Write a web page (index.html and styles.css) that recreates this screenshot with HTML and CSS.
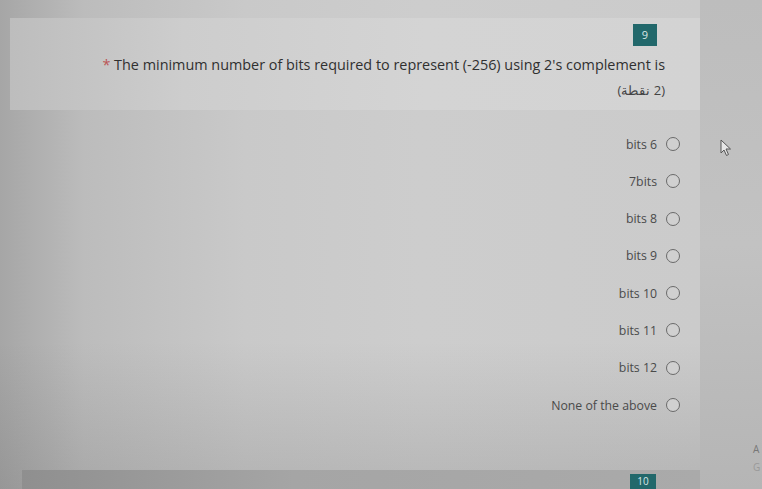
FILE: index.html
```html
<!DOCTYPE html>
<html>
<head>
<meta charset="utf-8">
<link rel="stylesheet" href="styles.css">
</head>
<body>
<div class="screen">
  <div class="main">
    <section class="question">
      <div class="qhead">
        <div class="badge">9</div>
        <p class="qtext"><span class="star">*</span> The minimum number of bits required to represent (-256) using 2's complement is</p>
        <p class="points">(<bdi lang="ar">نقطة</bdi> 2)</p>
      </div>
      <ul class="options">
        <li class="opt"><span class="label">bits 6</span><span class="radio"></span></li>
        <li class="opt"><span class="label">7bits</span><span class="radio"></span></li>
        <li class="opt"><span class="label">bits 8</span><span class="radio"></span></li>
        <li class="opt"><span class="label">bits 9</span><span class="radio"></span></li>
        <li class="opt"><span class="label">bits 10</span><span class="radio"></span></li>
        <li class="opt"><span class="label">bits 11</span><span class="radio"></span></li>
        <li class="opt"><span class="label">bits 12</span><span class="radio"></span></li>
        <li class="opt"><span class="label">None of the above</span><span class="radio"></span></li>
      </ul>
    </section>
    <section class="next">
      <div class="badge next-badge">10</div>
    </section>
  </div>
  <div class="side">
    <span class="edge e1">A</span>
    <span class="edge e2">G</span>
  </div>
  <svg class="cursor" width="12" height="18" viewBox="0 0 12 18"><path d="M1 1 L1 14 L4 11 L6.5 16.5 L8.5 15.5 L6 10 L10.5 10 Z" fill="#e6e6e6" stroke="#555" stroke-width="1"/></svg>
</div>
</body>
</html>
```
FILE: styles.css
```css
html, body {
  margin: 0;
  padding: 0;
}
body {
  width: 762px;
  height: 489px;
  overflow: hidden;
  font-family: "Open Sans", "Noto Sans", sans-serif;
  color: #3a3a3a;
}
.screen {
  position: relative;
  width: 762px;
  height: 489px;
  display: flex;
  background: linear-gradient(90deg, #a9a9a9 0%, #bdbdbd 15%, #c8c8c8 40%, #cbcbcb 70%, #c3c3c3 100%);
}
.main {
  width: 700px;
  display: flex;
  flex-direction: column;
  background:
    linear-gradient(180deg, rgba(255,255,255,0) 0%, rgba(255,255,255,0) 70%, rgba(80,80,80,0.18) 100%),
    linear-gradient(90deg, #a6a6a6 0%, #bcbcbc 12%, #c9c9c9 35%, #cdcdcd 60%, #cbcbcb 100%);
}
.question {
  flex: 1;
  display: flex;
  flex-direction: column;
}
.qhead {
  margin: 18px 0 0 10px;
  height: 92px;
  box-sizing: border-box;
  padding: 6px 35px 0 0;
  display: flex;
  flex-direction: column;
  align-items: flex-end;
  background: linear-gradient(90deg, #bdbdbd 0%, #cdcdcd 25%, #d4d4d4 60%, #d3d3d3 100%);
}
.badge {
  width: 24px;
  height: 22px;
  background: #22686b;
  color: #d8e6e6;
  font-size: 11px;
  line-height: 22px;
  text-align: center;
  margin-right: 8px;
}
.qtext {
  margin: 9px 0 0 0;
  font-size: 14.4px;
  line-height: 20px;
  color: #303030;
  white-space: nowrap;
}
.star {
  color: #b55;
}
.points {
  margin: 6px 0 0 0;
  font-size: 13px;
  line-height: 18px;
  color: #444;
}
.options {
  list-style: none;
  margin: 0;
  padding: 26px 20px 0 0;
  display: flex;
  flex-direction: column;
  align-items: flex-end;
  gap: 21.3px;
}
.opt {
  display: flex;
  align-items: center;
  gap: 9px;
  height: 16px;
}
.label {
  font-size: 12.3px;
  color: #4a4a4a;
}
.radio {
  width: 14px;
  height: 14px;
  border: 1px solid #6a6a6a;
  border-radius: 50%;
  box-sizing: border-box;
  background: #d0d0d0;
}
.next {
  height: 19px;
  margin-left: 22px;
  background: linear-gradient(90deg, #8f8f8f 0%, #a5a5a5 40%, #aaaaaa 100%);
  display: flex;
  justify-content: flex-end;
  padding-right: 44px;
}
.next-badge {
  margin-top: 4px;
  width: 26px;
  height: 22px;
  font-size: 10px;
  line-height: 14px;
  margin-right: 0;
}
.side {
  flex: 1;
  position: relative;
  background: linear-gradient(180deg, #bdbdbd 0%, #c2c2c2 50%, #b5b5b5 100%);
}
.edge {
  position: absolute;
  left: 53px;
  font-size: 10px;
  color: #777;
}
.e1 { top: 442px; }
.e2 { top: 460px; color: #999; }
.cursor {
  position: absolute;
  left: 720px;
  top: 139px;
}
```
